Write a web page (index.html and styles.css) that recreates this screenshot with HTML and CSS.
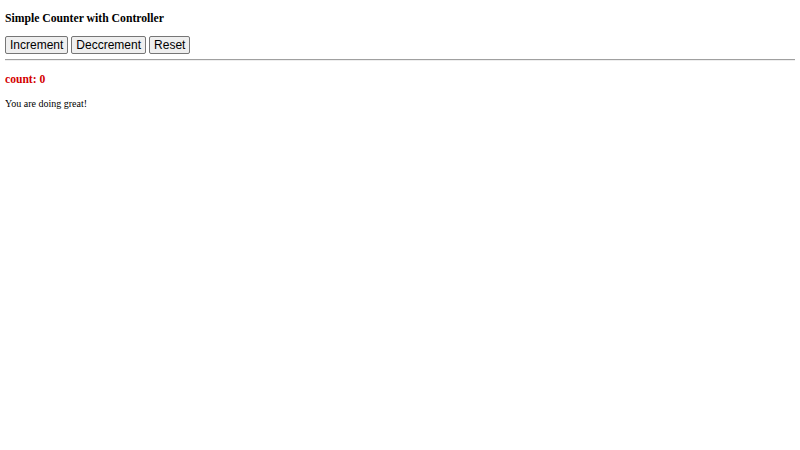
FILE: index.html
```html
<!DOCTYPE html>
<html lang="en">
<head>
    <meta charset="UTF-8">
    <title>Simple Counter with Controller</title>
    <link rel="stylesheet" href="styles.css">
</head>
<body>
    <h4 class="title">Simple Counter with Controller</h4>
    <div class="controls">
        <button class="btn">Increment</button>
        <button class="btn">Deccrement</button>
        <button class="btn">Reset</button>
    </div>
    <hr class="divider">
    <h4 class="count">count: 0</h4>
    <p class="message">You are doing great!</p>
</body>
</html>
```

FILE: styles.css
```css
body {
    margin: 5px;
    font-family: "Liberation Serif", "Times New Roman", serif;
    font-size: 10px;
    color: #000;
    background: #fff;
}

.title {
    font-size: 11.7px;
    font-weight: bold;
    margin: 7px 0 11px;
}

.controls {
    display: flex;
    gap: 3px;
}

.btn {
    font-family: "Liberation Sans", Arial, sans-serif;
    font-size: 12px;
    height: 18px;
    padding: 0 4px;
    margin: 0;
    background: #efefef;
    border: 1px solid #767676;
    border-radius: 2px;
    color: #000;
}

.divider {
    margin: 5px 0 0;
    border: none;
    border-top: 1px solid #a0a0a0;
    border-bottom: 1px solid #eee;
}

.count {
    color: #d40000;
    font-size: 11.6px;
    font-weight: bold;
    margin: 12px 0;
}

.message {
    margin: 0;
}
```
